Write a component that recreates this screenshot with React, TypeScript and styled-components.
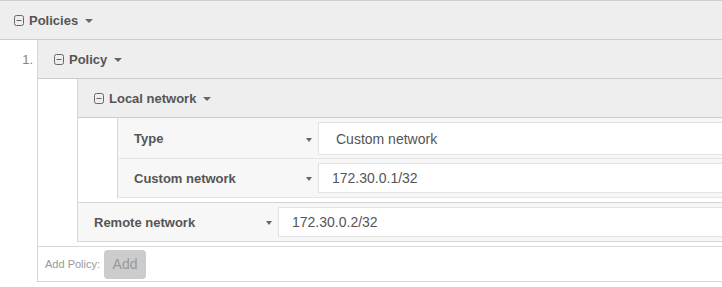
import React from "react";
import styled, { createGlobalStyle } from "styled-components";

const Global = createGlobalStyle`
  html, body { margin: 0; padding: 0; background: #fff; overflow: hidden; }
  body { font-family: "Liberation Sans", Arial, Helvetica, sans-serif; color: #555; }
  * { box-sizing: border-box; }
`;

const Root = styled.div`
  width: 1100px;
  border-top: 1px solid #cfcfcf;
  border-bottom: 1px solid #d2d2d2;
`;

const ObjectBox = styled.div<{ $bordered?: boolean }>`
  flex: 1;
  border-left: ${(p) => (p.$bordered ? "1px solid #d6d6d6" : "none")};
  border-bottom: ${(p) => (p.$bordered ? "1px solid #d6d6d6" : "none")};
`;

const Header = styled.div<{ $pad: number }>`
  display: flex;
  align-items: center;
  height: 39px;
  padding-left: ${(p) => p.$pad}px;
  background: #eeeeee;
  border-bottom: 1px solid #cccccc;
  font-size: 13px;
  font-weight: bold;
  color: #555;
`;

const Title = styled.span`
  margin-left: 5px;
`;

const Caret = styled.span`
  display: inline-block;
  width: 0;
  height: 0;
  margin-left: 7px;
  margin-top: 2px;
  border-left: 4px solid transparent;
  border-right: 4px solid transparent;
  border-top: 4px solid #666;
`;

const Content = styled.div<{ $indent?: number; $bottom: number }>`
  padding-left: ${(p) => p.$indent ?? 0}px;
  padding-bottom: ${(p) => p.$bottom}px;
`;

const ListItem = styled.div`
  display: flex;
`;

const Marker = styled.div`
  width: 37px;
  flex: none;
  padding-right: 4px;
  height: 39px;
  display: flex;
  align-items: center;
  justify-content: flex-end;
  font-size: 13px;
  color: #a0805c;
`;

const Fields = styled.div`
  border-left: 1px solid #d6d6d6;
`;

const FieldRow = styled.div<{ $boxed?: boolean; $pb: number }>`
  display: flex;
  align-items: center;
  padding: 4px 0 ${(p) => p.$pb}px 0;
  background: #f7f7f7;
  border-bottom: 1px solid ${(p) => (p.$boxed ? "#d6d6d6" : "#e4e4e4")};
  border-left: ${(p) => (p.$boxed ? "1px solid #d6d6d6" : "none")};
`;

const Label = styled.div`
  width: 200px;
  flex: none;
  display: flex;
  align-items: center;
  justify-content: space-between;
  padding: 0 6px 0 16px;
  font-size: 13px;
  font-weight: bold;
  color: #555;
`;

const LabelCaret = styled.span`
  display: inline-block;
  width: 0;
  height: 0;
  margin-top: 2px;
  border-left: 3.5px solid transparent;
  border-right: 3.5px solid transparent;
  border-top: 4px solid #666;
`;

const Input = styled.div<{ $select?: boolean }>`
  flex: 1;
  height: ${(p) => (p.$select ? 33 : 30)}px;
  display: flex;
  align-items: center;
  padding-left: ${(p) => (p.$select ? 17 : 13)}px;
  background: #fff;
  border: 1px solid #e2e2e2;
  font-size: 14px;
  color: #555;
`;

const AddBar = styled.div`
  margin-left: 37px;
  height: 35px;
  display: flex;
  align-items: center;
  padding-left: 7px;
  border-left: 1px solid #d6d6d6;
  border-bottom: 1px solid #d6d6d6;
`;

const AddLabel = styled.span`
  font-size: 11px;
  color: #999;
`;

const AddButton = styled.button`
  margin-left: 4px;
  width: 42px;
  height: 29px;
  border: none;
  border-radius: 4px;
  background: #cccccc;
  color: #999;
  font-family: inherit;
  font-size: 14px;
  padding: 0;
  cursor: default;
`;

const MinusSquare = () => (
  <svg width="10" height="11" viewBox="0 0 10 11" fill="none">
    <rect x="0.5" y="0.5" width="9" height="10" rx="2" stroke="#666" strokeWidth="1" />
    <line x1="2.5" y1="5.5" x2="7.5" y2="5.5" stroke="#666" strokeWidth="1" />
  </svg>
);

const SectionHeader = ({ title, pad }: { title: string; pad: number }) => (
  <Header $pad={pad}>
    <MinusSquare />
    <Title>{title}</Title>
    <Caret />
  </Header>
);

export default function App() {
  return (
    <>
      <Global />
      <Root>
        <SectionHeader title="Policies" pad={14} />
        <Content $bottom={5}>
          <ListItem>
            <Marker>1.</Marker>
            <ObjectBox $bordered>
              <SectionHeader title="Policy" pad={16} />
              <Content $indent={39} $bottom={4}>
                <ObjectBox $bordered>
                  <SectionHeader title="Local network" pad={16} />
                  <Content $indent={39} $bottom={4}>
                    <Fields>
                      <FieldRow $pb={3}>
                        <Label>
                          Type
                          <LabelCaret />
                        </Label>
                        <Input $select>Custom network</Input>
                      </FieldRow>
                      <FieldRow $pb={4}>
                        <Label>
                          Custom network
                          <LabelCaret />
                        </Label>
                        <Input>172.30.0.1/32</Input>
                      </FieldRow>
                    </Fields>
                  </Content>
                </ObjectBox>
                <FieldRow $boxed $pb={4}>
                  <Label>
                    Remote network
                    <LabelCaret />
                  </Label>
                  <Input>172.30.0.2/32</Input>
                </FieldRow>
              </Content>
            </ObjectBox>
          </ListItem>
          <AddBar>
            <AddLabel>Add Policy:</AddLabel>
            <AddButton>Add</AddButton>
          </AddBar>
        </Content>
      </Root>
    </>
  );
}
